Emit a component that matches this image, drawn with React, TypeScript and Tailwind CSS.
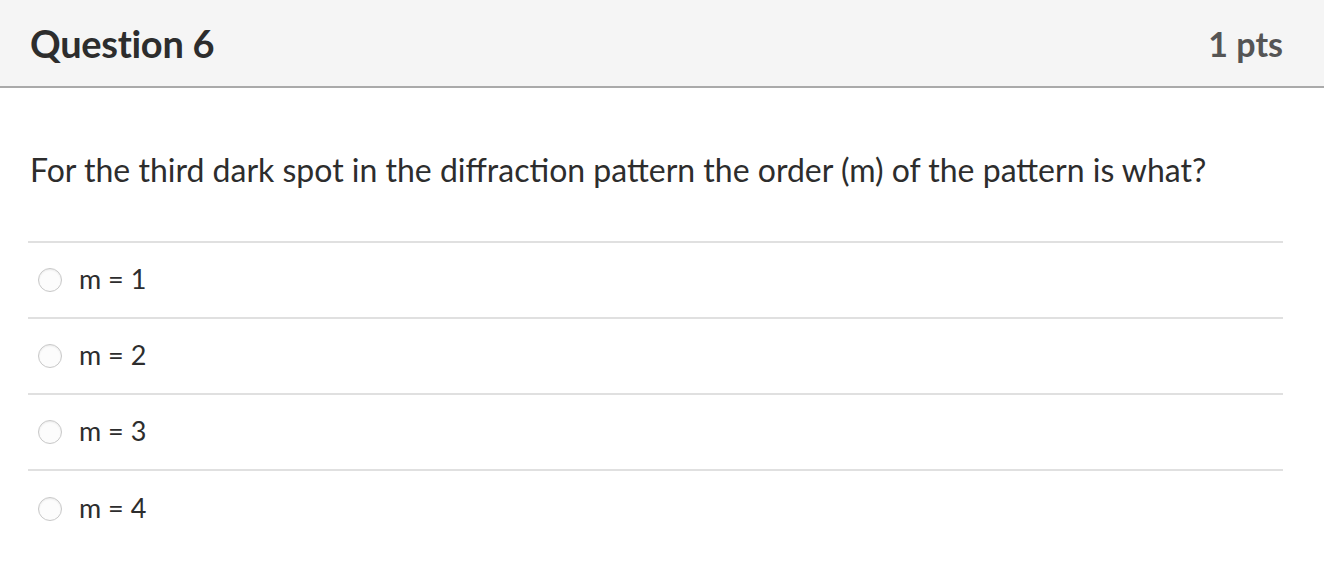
export default function App() {
  const answers = ["m = 1", "m = 2", "m = 3", "m = 4"];
  return (
    <div className="w-[1324px] h-[572px] bg-white font-['Lato',sans-serif] text-[#2d3b45]">
      <div className="h-[88px] bg-[#f5f5f5] border-b-2 border-[#aaaaaa] flex items-center justify-between pl-[30px] pr-[41px]">
        <h2 className="text-[38px] font-bold text-[#2d2d2d] tracking-[-0.3px]">Question 6</h2>
        <div className="text-[34px] font-bold text-[#555555]">1 pts</div>
      </div>
      <div className="pl-[28px] pr-[41px]">
        <p className="mt-[62px] pl-[2px] text-[32px] leading-[40px] text-[#2d2d2d]">
          For the third dark spot in the diffraction pattern the order (m) of the pattern is what?
        </p>
        <div className="mt-[51px] border-t-2 border-[#e0e0e0]">
          {answers.map((a, i) => (
            <div
              key={a}
              className={`h-[76px] flex items-center ${i < answers.length - 1 ? "border-b-2 border-[#e0e0e0]" : ""}`}
            >
              <span className="ml-[10px] w-[24px] h-[24px] rounded-full border border-[#c8c8c8] bg-[#fcfcfc] shadow-[inset_0_1px_2px_rgba(0,0,0,0.08)]" />
              <span className="ml-[17px] text-[27px] leading-[32px] text-[#2d2d2d] -mt-[3px]">{a}</span>
            </div>
          ))}
        </div>
      </div>
    </div>
  );
}
